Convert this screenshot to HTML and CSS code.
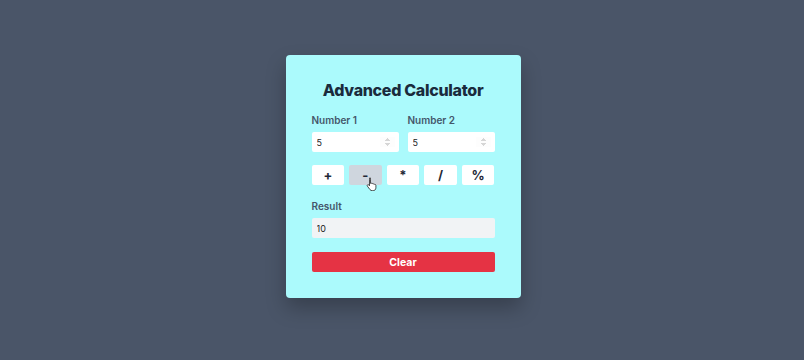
FILE: index.html
```html
<!doctype html>
<html>
<head>
<meta charset="utf-8">
<title>Advanced Calculator</title>
<link rel="stylesheet" href="styles.css">
</head>
<body>

<div class="calc">
	<h1>Advanced Calculator</h1>

	<div class="inputs">
		<label>
			<span>Number 1</span>
			<input type="number" name="num1" value="5">
		</label>
		<label>
			<span>Number 2</span>
			<input type="number" name="num2" value="5">
		</label>
	</div>

	<div class="ops">
		<button>+</button>
		<button class="hover">-
			<svg class="cursor" width="12" height="14" viewBox="0 0 12 14">
				<path d="M3.5 1.2c.6 0 1 .4 1 1v4.2l.3-.1c.5-.2 1 0 1.2.4.4-.3 1-.2 1.3.2.4-.2 1-.1 1.2.4l.3.1c.6-.1 1.1.4 1.1 1v2.4c0 1.6-1.2 2.9-2.8 2.9H6.2c-.9 0-1.700-.4-2.2-1.1L1.4 9.2c-.4-.5-.3-1.1.2-1.4.4-.3 1-.2 1.3.2l.6.8V2.2c0-.6.4-1 1-1z" fill="#fff" stroke="#222" stroke-width=".8" stroke-linejoin="round"/>
			</svg>
		</button>
		<button>*</button>
		<button>/</button>
		<button>%</button>
	</div>

	<label class="result">
		<span>Result</span>
		<input type="text" value="10" readonly>
	</label>

	<button class="clear">Clear</button>
</div>

</body>
</html>
```

FILE: styles.css
```css
body {
	margin: 0;
	height: 360px;
	background: #4a5568;
	font-family: Inter, "Liberation Sans", sans-serif;
	display: flex;
	align-items: flex-start;
	justify-content: center;
}

.calc {
	margin-top: 55px;
	margin-left: 2px;
	width: 235px;
	box-sizing: border-box;
	padding: 25px 26px 26px;
	background: #abfafc;
	border-radius: 4px;
	box-shadow: 0 10px 20px rgba(0, 0, 0, 0.25);
}

h1 {
	margin: 0 0 14px;
	font-size: 16px;
	line-height: 20px;
	font-weight: 800;
	color: #1a2b3c;
	text-align: center;
	letter-spacing: -0.3px;
}

.inputs {
	display: grid;
	grid-template-columns: 1fr 1fr;
	gap: 9px;
}

label {
	display: block;
}

label span {
	display: block;
	font-size: 10px;
	line-height: 12px;
	font-weight: 600;
	color: #44566a;
	margin-bottom: 6px;
}

input {
	display: block;
	width: 100%;
	box-sizing: border-box;
	height: 20px;
	border: none;
	border-radius: 2px;
	padding: 0 4px 0 5px;
	font-family: Inter, "Liberation Sans", sans-serif;
	font-size: 9px;
	color: #222;
	background: #fff;
	outline: none;
}

input::-webkit-inner-spin-button {
	opacity: 0.35;
	height: 11px;
}

.ops {
	display: grid;
	grid-template-columns: repeat(5, 1fr);
	gap: 5px;
	margin-top: 13px;
}

.ops button {
	position: relative;
	height: 20px;
	border: none;
	border-radius: 2px;
	background: #fff;
	font-family: Inter, "Liberation Sans", sans-serif;
	font-size: 13px;
	font-weight: 700;
	color: #1f2937;
	padding: 0;
}

.ops button.hover {
	background: #cfd6de;
}

.cursor {
	position: absolute;
	left: 17px;
	top: 12px;
}

.result {
	margin-top: 15px;
}

.result input {
	background: #f1f3f5;
}

.clear {
	display: block;
	width: 100%;
	height: 20px;
	margin-top: 14px;
	border: none;
	border-radius: 2px;
	background: #e53344;
	color: #fff;
	font-family: Inter, "Liberation Sans", sans-serif;
	font-size: 10.5px;
	font-weight: 700;
}
```
